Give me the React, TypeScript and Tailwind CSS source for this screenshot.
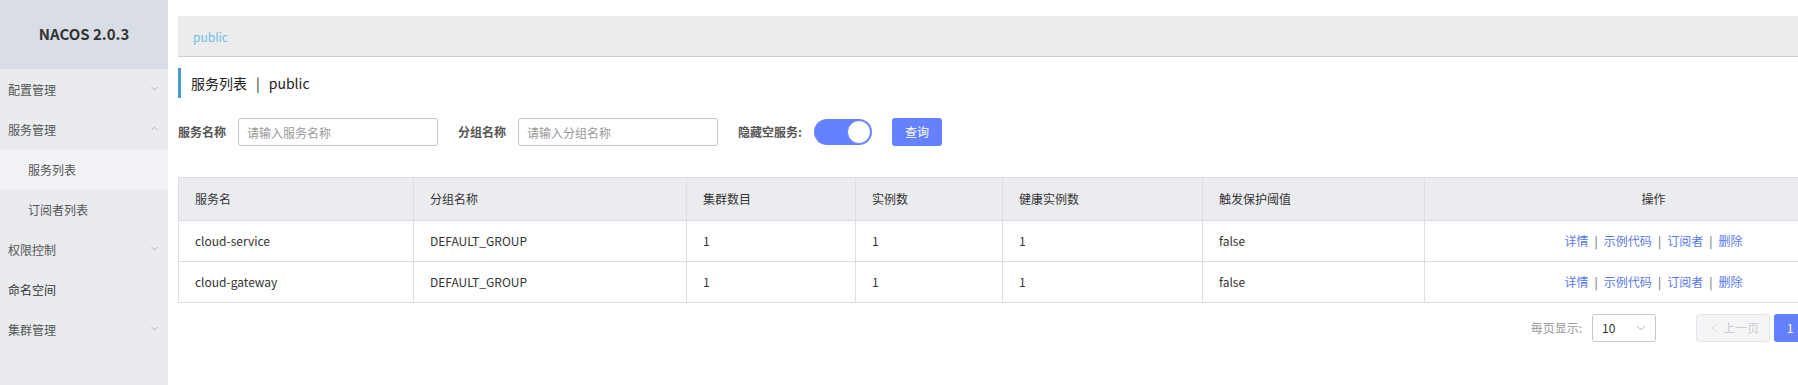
import { ChevronDown, ChevronUp, ChevronLeft } from "lucide-react";

const menu = [
  { label: "配置管理", arrow: "down" },
  { label: "服务管理", arrow: "up" },
  { label: "服务列表", sub: true, active: true },
  { label: "订阅者列表", sub: true },
  { label: "权限控制", arrow: "down" },
  { label: "命名空间", dark: true },
  { label: "集群管理", arrow: "down" },
];

const columns = [
  { title: "服务名", w: "w-[235px]" },
  { title: "分组名称", w: "w-[273px]" },
  { title: "集群数目", w: "w-[169px]" },
  { title: "实例数", w: "w-[147px]" },
  { title: "健康实例数", w: "w-[200px]" },
  { title: "触发保护阈值", w: "w-[222px]" },
  { title: "操作", w: "w-[458px]", center: true },
];

const rows = [
  ["cloud-service", "DEFAULT_GROUP", "1", "1", "1", "false"],
  ["cloud-gateway", "DEFAULT_GROUP", "1", "1", "1", "false"],
];

const actions = ["详情", "示例代码", "订阅者", "删除"];

export default function App() {
  return (
    <div
      className="flex w-[1798px] h-[385px] overflow-hidden bg-white text-[12px] text-[#333]"
      style={{ fontFamily: '"Noto Sans CJK SC", "Noto Sans", sans-serif' }}
    >
      {/* Sidebar */}
      <aside className="w-[168px] shrink-0 bg-[#e9ebef]">
        <div className="h-[69px] bg-[#d9dde5] flex items-center justify-center font-bold text-[15px] text-[#333]">
          NACOS 2.0.3
        </div>
        <nav className="pt-[1px]">
          {menu.map((m) => (
            <div
              key={m.label}
              className={`h-[40px] flex items-center justify-between pr-[8px] ${
                m.sub ? "pl-[28px]" : "pl-[8px]"
              } ${m.active ? "bg-[#f2f3f7]" : ""} ${
                m.dark ? "text-[#333]" : "text-[#555]"
              }`}
            >
              <span>{m.label}</span>
              {m.arrow === "down" && (
                <ChevronDown size={11} strokeWidth={1.5} className="text-[#999] -mt-[4px]" />
              )}
              {m.arrow === "up" && (
                <ChevronUp size={11} strokeWidth={1.5} className="text-[#999] -mt-[4px]" />
              )}
            </div>
          ))}
        </nav>
      </aside>

      {/* Main */}
      <main className="flex-1 min-w-0 pl-[10px] pt-[16px]">
        <div className="w-[1704px]">
          {/* Breadcrumb */}
          <div className="h-[41px] bg-[#ececec] border-b border-[#cfcfcf] flex items-center pl-[15px] pt-[2px] text-[#6cc0e8]">
            public
          </div>

          {/* Title */}
          <div className="mt-[11px] h-[30px] border-l-[3px] border-[#4a9ad6] flex items-center pl-[10px] text-[14px] text-[#222]">
            服务列表<span className="mx-[9px]">|</span>public
          </div>

          {/* Filters */}
          <div className="mt-[20px] h-[28px] flex items-center">
            <span className="font-bold text-[#555] w-[60px]">服务名称</span>
            <input
              placeholder="请输入服务名称"
              className="w-[200px] h-[28px] border border-[#c4c6cf] rounded-[3px] px-[8px] text-[12px] placeholder:text-[#999] outline-none"
            />
            <span className="font-bold text-[#555] ml-[20px] w-[60px]">分组名称</span>
            <input
              placeholder="请输入分组名称"
              className="w-[200px] h-[28px] border border-[#c4c6cf] rounded-[3px] px-[8px] text-[12px] placeholder:text-[#999] outline-none"
            />
            <span className="font-bold text-[#555] ml-[20px]">隐藏空服务:</span>
            <div className="ml-[12px] w-[58px] h-[26px] rounded-full bg-[#6581ff] flex items-center justify-end pr-[1px]">
              <div className="w-[24px] h-[24px] rounded-full bg-white border border-[#6581ff]" />
            </div>
            <button className="ml-[20px] w-[50px] h-[28px] rounded-[3px] bg-[#6581ff] text-white text-[12px]">
              查询
            </button>
          </div>

          {/* Table */}
          <table className="mt-[31px] w-[1704px] table-fixed border-collapse border border-[#dcdee3]">
            <colgroup>
              {columns.map((c) => (
                <col key={c.title} className={c.w} />
              ))}
            </colgroup>
            <thead>
              <tr className="bg-[#ebecf0] h-[43px]">
                {columns.map((c) => (
                  <th
                    key={c.title}
                    className={`border border-[#dcdee3] font-normal px-[16px] ${
                      c.center ? "text-center" : "text-left"
                    }`}
                  >
                    {c.title}
                  </th>
                ))}
              </tr>
            </thead>
            <tbody>
              {rows.map((r) => (
                <tr key={r[0]} className="h-[41px]">
                  {r.map((v, i) => (
                    <td key={i} className="border border-[#dcdee3] px-[16px]">
                      {v}
                    </td>
                  ))}
                  <td className="border border-[#dcdee3] text-center">
                    {actions.map((a, i) => (
                      <span key={a}>
                        {i > 0 && <span className="mx-[6px] text-[#666]">|</span>}
                        <span className="text-[#5a78f0]">{a}</span>
                      </span>
                    ))}
                  </td>
                </tr>
              ))}
            </tbody>
          </table>

          {/* Pagination */}
          <div className="mt-[11px] flex items-center justify-end">
            <span className="text-[#999]">每页显示:</span>
            <div className="ml-[10px] w-[64px] h-[28px] border border-[#c4c6cf] rounded-[3px] flex items-center justify-between pl-[9px] pr-[7px]">
              <span className="text-[#333]">10</span>
              <ChevronDown size={14} strokeWidth={1.3} className="text-[#999]" />
            </div>
            <div className="ml-[40px] w-[74px] h-[28px] border border-[#e6e7eb] bg-[#f4f5f7] rounded-[3px] flex items-center justify-center text-[#ccc]">
              <ChevronLeft size={14} strokeWidth={1.3} className="mr-[2px]" />
              上一页
            </div>
            <div className="ml-[4px] w-[32px] h-[28px] rounded-[3px] bg-[#6581ff] text-white flex items-center justify-center">
              1
            </div>
            <div className="ml-[4px] w-[72px] h-[28px] border border-[#c4c6cf] rounded-[3px]" />
          </div>
        </div>
      </main>
    </div>
  );
}
